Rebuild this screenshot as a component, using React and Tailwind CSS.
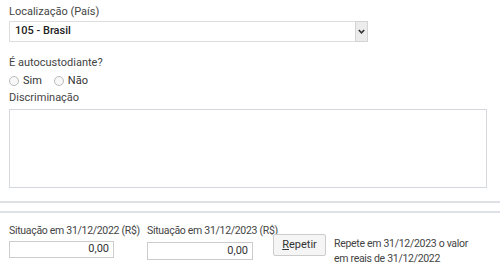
export default function App() {
  return (
    <div className="w-[500px] h-[276px] bg-white text-[11px] text-[#444] overflow-hidden" style={{ fontFamily: 'Roboto, "Liberation Sans", sans-serif' }}>
      <div className="px-[9px] pt-[5px]">
        <div className="leading-[14px]">Localização (País)</div>
        <div className="mt-[2px] flex h-[21px] w-[359px]">
          <div className="flex-1 border border-[#ddd] border-r-0 flex items-center pl-[5px] text-[#222] font-medium">105 - Brasil</div>
          <div className="w-[13px] border border-[#d4d4d4] bg-[#ececec] flex items-center justify-center">
            <svg width="7" height="5" viewBox="0 0 7 5"><path d="M0.8 1 L3.5 3.8 L6.2 1" fill="none" stroke="#333" strokeWidth="1.6" /></svg>
          </div>
        </div>
        <div className="mt-[14px] leading-[14px]">É autocustodiante?</div>
        <div className="mt-[4px] flex items-center h-[14px]">
          <span className="w-[10px] h-[10px] rounded-full border border-[#bbb] bg-[#f8f8f8]"></span>
          <span className="ml-[4px] text-[#333]">Sim</span>
          <span className="ml-[12px] w-[10px] h-[10px] rounded-full border border-[#bbb] bg-[#f8f8f8]"></span>
          <span className="ml-[4px] text-[#333]">Não</span>
        </div>
        <div className="mt-[3px] leading-[14px]">Discriminação</div>
        <div className="mt-[4px] w-[478px] h-[79px] border border-[#d5d9de]"></div>
      </div>
      <div className="mt-[13px] h-[2px] bg-[#dde1e6]"></div>
      <div className="mt-[8px] h-[2px] bg-[#dde1e6]"></div>
      <div className="px-[9px] pt-[11px] flex items-start text-[10.5px] tracking-[-0.3px]">
        <div className="w-[138px] flex flex-col">
          <div className="leading-[14px] whitespace-nowrap">Situação em 31/12/2022 (R$)</div>
          <div className="mt-[3px] w-[105px] h-[17px] border border-[#ccc] flex items-center justify-end pr-[4px] text-[#333] text-[11px] tracking-normal">0,00</div>
        </div>
        <div className="flex flex-col w-[126px]">
          <div className="leading-[14px] whitespace-nowrap">Situação em 31/12/2023 (R$)</div>
          <div className="mt-[4px] w-[106px] h-[18px] border border-[#ccc] flex items-center justify-end pr-[4px] text-[#333] text-[11px] tracking-normal">0,00</div>
        </div>
        <div className="mt-[10px] w-[53px] h-[22px] border border-[#ccc] rounded-[2px] bg-[#f5f5f5] flex items-center justify-center text-[#333] text-[11px] tracking-normal"><span className="underline">R</span>epetir</div>
        <div className="ml-[8px] mt-[12px] leading-[15px] text-[#444] whitespace-nowrap">Repete em 31/12/2023 o valor<br />em reais de 31/12/2022</div>
      </div>
    </div>
  );
}
